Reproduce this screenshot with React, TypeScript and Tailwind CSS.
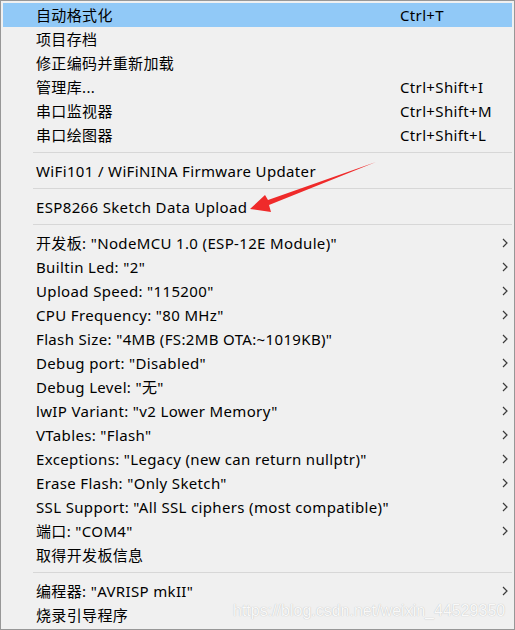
import React from "react";

type Item =
	| { kind: "item"; label: string; shortcut?: string; sub?: boolean; active?: boolean }
	| { kind: "sep" };

const items: Item[] = [
	{ kind: "item", label: "自动格式化", shortcut: "Ctrl+T", active: true },
	{ kind: "item", label: "项目存档" },
	{ kind: "item", label: "修正编码并重新加载" },
	{ kind: "item", label: "管理库...", shortcut: "Ctrl+Shift+I" },
	{ kind: "item", label: "串口监视器", shortcut: "Ctrl+Shift+M" },
	{ kind: "item", label: "串口绘图器", shortcut: "Ctrl+Shift+L" },
	{ kind: "sep" },
	{ kind: "item", label: "WiFi101 / WiFiNINA Firmware Updater" },
	{ kind: "sep" },
	{ kind: "item", label: "ESP8266 Sketch Data Upload" },
	{ kind: "sep" },
	{ kind: "item", label: '开发板: "NodeMCU 1.0 (ESP-12E Module)"', sub: true },
	{ kind: "item", label: 'Builtin Led: "2"', sub: true },
	{ kind: "item", label: 'Upload Speed: "115200"', sub: true },
	{ kind: "item", label: 'CPU Frequency: "80 MHz"', sub: true },
	{ kind: "item", label: 'Flash Size: "4MB (FS:2MB OTA:~1019KB)"', sub: true },
	{ kind: "item", label: 'Debug port: "Disabled"', sub: true },
	{ kind: "item", label: 'Debug Level: "无"', sub: true },
	{ kind: "item", label: 'lwIP Variant: "v2 Lower Memory"', sub: true },
	{ kind: "item", label: 'VTables: "Flash"', sub: true },
	{ kind: "item", label: 'Exceptions: "Legacy (new can return nullptr)"', sub: true },
	{ kind: "item", label: 'Erase Flash: "Only Sketch"', sub: true },
	{ kind: "item", label: 'SSL Support: "All SSL ciphers (most compatible)"', sub: true },
	{ kind: "item", label: '端口: "COM4"', sub: true },
	{ kind: "item", label: "取得开发板信息" },
	{ kind: "sep" },
	{ kind: "item", label: '编程器: "AVRISP mkII"', sub: true },
	{ kind: "item", label: "烧录引导程序" },
];

function Chevron() {
	return (
		<svg width="6" height="10" viewBox="0 0 6 10" className="shrink-0">
			<path d="M1 1 L5 5 L1 9" fill="none" stroke="#3c3c3c" strokeWidth="1.2" />
		</svg>
	);
}

export default function App() {
	return (
		<div
			className="relative w-[515px] h-[630px] overflow-hidden bg-[#f0f0f0] border border-[#979797] p-[2px] text-[15px] tracking-[0.35px] text-black"
			style={{ fontFamily: '"Noto Sans", "Noto Sans CJK SC", sans-serif' }}
		>
			{items.map((it, i) =>
				it.kind === "sep" ? (
					<div key={i} className="h-[12px] pl-[30px] pt-[5px]">
						<div className="h-px bg-[#d7d7d7]" />
					</div>
				) : (
					<div
						key={i}
						className={`flex items-center h-[24px] pl-[33px] pr-[4px] ${it.active ? "bg-[#91c9f7]" : ""}`}
					>
						<span className="flex-1 whitespace-nowrap leading-none">{it.label}</span>
						{it.shortcut && <span className="w-[108px] whitespace-nowrap leading-none">{it.shortcut}</span>}
						{it.sub && <Chevron />}
					</div>
				)
			)}

			{/* red annotation arrow */}
			<svg className="absolute left-0 top-0 pointer-events-none" width="515" height="630">
				<path d="M375 161 L267 199 L264 194 L249 208 L270 211 L268 204 Z" fill="#ef2a2a" />
			</svg>

			{/* watermark */}
			<div
				className="absolute left-[232px] top-[598px] whitespace-nowrap text-[16px] tracking-normal text-[#f9f9f9] [text-shadow:0_0_1px_#b0b0b0]"
				style={{ fontFamily: '"Liberation Sans", Arial, sans-serif' }}
			>
				https://blog.csdn.net/weixin_44529350
			</div>
		</div>
	);
}
